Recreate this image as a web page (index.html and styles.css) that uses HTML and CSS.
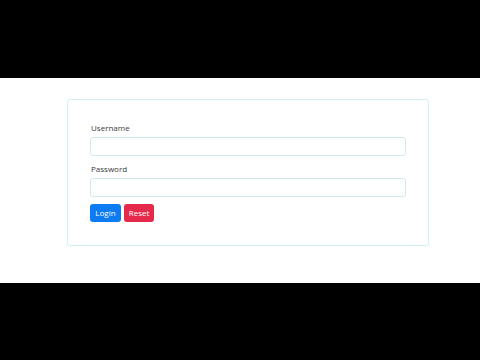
FILE: index.html
```html
<!DOCTYPE html>
<html>
<head>
<meta charset="utf-8">
<link rel="stylesheet" href="styles.css">
</head>
<body>
<div class="bar"></div>
<main class="stage">
  <form class="card">
    <label class="label">Username</label>
    <input class="field" type="text">
    <label class="label">Password</label>
    <input class="field" type="password">
    <div class="actions">
      <button type="button" class="btn btn-primary">Login</button>
      <button type="button" class="btn btn-danger">Reset</button>
    </div>
  </form>
</main>
<div class="bar bar-bottom"></div>
</body>
</html>
```

FILE: styles.css
```css
html, body {
  margin: 0;
  padding: 0;
  background: #000;
}
body {
  width: 480px;
  height: 360px;
  font-family: "Open Sans", "Noto Sans", sans-serif;
  color: #333;
}
.bar {
  height: 78px;
  background: #000;
}
.bar-bottom {
  height: 77px;
}
.stage {
  height: 205px;
  background: #fff;
  padding-top: 21px;
  box-sizing: border-box;
}
.card {
  margin-left: 67px;
  width: 362px;
  height: 147px;
  box-sizing: border-box;
  border: 1px solid #d3eef0;
  border-radius: 3px;
  padding: 22px 22px 0 22px;
  display: flex;
  flex-direction: column;
}
.label {
  display: block;
  font-size: 8px;
  line-height: 12px;
  color: #3a3a3a;
  padding-left: 1px;
}
.field {
  margin: 3px 0 7px 0;
  height: 19px;
  box-sizing: border-box;
  border: 1px solid #cfeaec;
  border-radius: 3px;
  background: #fff;
  padding: 0;
  outline: none;
}
.actions {
  display: flex;
  gap: 3px;
}
.btn {
  height: 18px;
  border: none;
  border-radius: 3px;
  color: #fff;
  font-family: "Open Sans", "Noto Sans", sans-serif;
  font-size: 8px;
  padding: 0;
  line-height: 18px;
}
.btn-primary {
  width: 31px;
  background: #0d7bf2;
}
.btn-danger {
  width: 30px;
  background: #e5294b;
}
```
